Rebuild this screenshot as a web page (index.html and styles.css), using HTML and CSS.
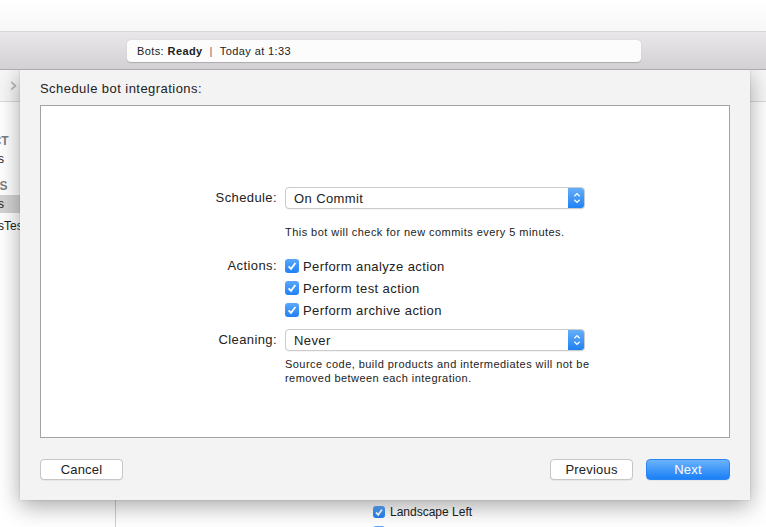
FILE: index.html
```html
<!DOCTYPE html>
<html lang="en">
<head>
  <meta charset="UTF-8">
  <meta name="viewport" content="width=device-width, initial-scale=1.0">
  <title>Bots</title>
  <link rel="stylesheet" href="styles.css">
</head>
<body>
  <div class="titlebar"></div>
  <header class="toolbar">
    <div class="activity">
      <span>Bots: <b>Ready</b></span>
      <span class="sep">|</span>
      <span>Today at 1:33</span>
    </div>
  </header>

  <div class="workspace">
    <aside class="sidebar">
      <div class="jumpbar"><span class="chevron">›</span></div>
      <ul class="nav">
        <li class="nav-head head-project">PROJECT</li>
        <li class="nav-item">Demo Apps</li>
        <li class="nav-head head-targets">TARGETS</li>
        <li class="nav-item selected">Demo Apps</li>
        <li class="nav-item item-tests">Demo AppsTests</li>
      </ul>
    </aside>
    <section class="editor">
      <div class="jumpbar"></div>
      <div class="orientations">
        <label class="small-check"><span class="box"><svg viewBox="0 0 12 12"><path d="M3 6.4 L5.2 8.8 L9 3.4"/></svg></span>Landscape Left</label>
        <label class="small-check"><span class="box"><svg viewBox="0 0 12 12"><path d="M3 6.4 L5.2 8.8 L9 3.4"/></svg></span>Landscape Right</label>
      </div>
    </section>
  </div>

  <div class="sheet">
    <h1 class="sheet-title">Schedule bot integrations:</h1>
    <div class="sheet-box">
      <div class="row">
        <span class="label">Schedule:</span>
        <div class="popup">
          <span class="popup-value">On Commit</span>
          <span class="stepper"><svg viewBox="0 0 16 20"><path d="M5 8 L8 5 L11 8"/><path d="M5 12 L8 15 L11 12"/></svg></span>
        </div>
      </div>
      <div class="row row-note">
        <span class="label"></span>
        <p class="note">This bot will check for new commits every 5 minutes.</p>
      </div>
      <div class="row row-actions">
        <span class="label">Actions:</span>
        <div class="checks">
          <label class="check"><span class="box"><svg viewBox="0 0 14 14"><path d="M3.6 7.4 L6 9.9 L10.4 4"/></svg></span>Perform analyze action</label>
          <label class="check"><span class="box"><svg viewBox="0 0 14 14"><path d="M3.6 7.4 L6 9.9 L10.4 4"/></svg></span>Perform test action</label>
          <label class="check"><span class="box"><svg viewBox="0 0 14 14"><path d="M3.6 7.4 L6 9.9 L10.4 4"/></svg></span>Perform archive action</label>
        </div>
      </div>
      <div class="row row-cleaning">
        <span class="label">Cleaning:</span>
        <div class="popup">
          <span class="popup-value">Never</span>
          <span class="stepper"><svg viewBox="0 0 16 20"><path d="M5 8 L8 5 L11 8"/><path d="M5 12 L8 15 L11 12"/></svg></span>
        </div>
      </div>
      <div class="row row-note2">
        <span class="label"></span>
        <p class="note">Source code, build products and intermediates will not be<br>removed between each integration.</p>
      </div>
    </div>
    <footer class="sheet-buttons">
      <button class="btn">Cancel</button>
      <div class="btn-group">
        <button class="btn">Previous</button>
        <button class="btn btn-primary">Next</button>
      </div>
    </footer>
  </div>
</body>
</html>
```

FILE: styles.css
```css
* {
  box-sizing: border-box;
}

body {
  margin: 0;
  width: 766px;
  height: 527px;
  overflow: hidden;
  position: relative;
  background: #fff;
  font-family: 'Liberation Sans', Arial, sans-serif;
  font-size: 13px;
  color: #222;
}

.titlebar {
  height: 32px;
  background: linear-gradient(#fff, #f7f7f7);
  border-bottom: 1px solid #d6d6d6;
}

.toolbar {
  position: relative;
  z-index: 2;
  height: 38px;
  padding-top: 8px;
  background: linear-gradient(#e9e7e9, #d3d1d3);
  border-bottom: 1px solid #adabad;
  display: flex;
  justify-content: center;
}

.activity {
  width: 514px;
  height: 22px;
  margin-left: 2px;
  padding-left: 10px;
  background: #fcfcfc;
  border-radius: 4px;
  box-shadow: 0 0.5px 1px rgba(0, 0, 0, 0.2);
  display: flex;
  align-items: center;
  gap: 7px;
  font-size: 11px;
  letter-spacing: 0.4px;
  color: #222;
}

.activity .sep {
  color: #666;
}

.workspace {
  display: flex;
  height: 457px;
}

.sidebar {
  width: 116px;
  border-right: 1px solid #cfcfcf;
  overflow: hidden;
}

.jumpbar {
  height: 32px;
  background: #f7f7f7;
  border-bottom: 1px solid #d9d9d9;
}

.chevron {
  display: block;
  padding-left: 9px;
  font-size: 22px;
  line-height: 30px;
  color: #b5b5b5;
  font-family: 'DejaVu Sans', sans-serif;
}

.nav {
  list-style: none;
  margin: 0;
  margin-top: 30px;
  padding: 0;
}

.nav li {
  white-space: nowrap;
  height: 18px;
  line-height: 18px;
  font-size: 12px;
}

.nav-head {
  font-weight: bold;
  font-size: 11px;
  color: #7d7d7d;
}

.head-project {
  text-indent: -48px;
}

.head-targets {
  margin-top: 9px;
  text-indent: -49px;
}

.nav-item {
  text-indent: -58px;
}

.nav-item.selected {
  background: #d3d3d3;
}

.item-tests {
  margin-top: 4px;
}

.editor {
  flex: 1;
}

.orientations {
  padding: 403px 0 0 257px;
  display: flex;
  flex-direction: column;
  gap: 6px;
}

.small-check {
  display: flex;
  align-items: center;
  gap: 5px;
  font-size: 12px;
  height: 14px;
}

.small-check .box {
  width: 12px;
  height: 12px;
  border-radius: 3px;
  background: linear-gradient(#5aa8fb, #2180f4);
  display: flex;
}

.small-check svg {
  width: 12px;
  height: 12px;
  fill: none;
  stroke: #fff;
  stroke-width: 1.7;
}

.sheet {
  position: absolute;
  z-index: 1;
  left: 20px;
  top: 69px;
  width: 730px;
  height: 431px;
  padding: 12px 20px 0 20px;
  background: #f3f3f3;
  box-shadow: 0 6px 22px rgba(0, 0, 0, 0.35), 0 0 2px rgba(0, 0, 0, 0.15);
}

.sheet-title {
  margin: 0;
  font-size: 13px;
  font-weight: normal;
  line-height: 16px;
  letter-spacing: 0.45px;
}

.sheet-box {
  margin-top: 8px;
  height: 333px;
  background: #fff;
  border: 1px solid #a3a3a3;
  padding-top: 81px;
  letter-spacing: 0.4px;
}

.row {
  display: flex;
  gap: 8px;
}

.label {
  width: 236px;
  flex: none;
  text-align: right;
  line-height: 22px;
}

.popup {
  width: 300px;
  height: 22px;
  border: 1px solid #cbcbcb;
  border-radius: 4px;
  background: #fff;
  box-shadow: 0 0.5px 0.5px rgba(0, 0, 0, 0.08);
  display: flex;
  align-items: center;
  justify-content: space-between;
  overflow: hidden;
}

.popup-value {
  padding-left: 8px;
}

.stepper {
  width: 17px;
  height: 22px;
  margin: -1px -1px -1px 0;
  background: linear-gradient(#69b1fb, #1b7ff6);
  border-radius: 0 4px 4px 0;
  display: flex;
  align-items: center;
  justify-content: center;
}

.stepper svg {
  width: 14px;
  height: 18px;
  fill: none;
  stroke: #fff;
  stroke-width: 1.5;
}

.note {
  margin: 0;
  font-size: 11px;
  line-height: 14px;
  letter-spacing: 0.45px;
}

.row-note {
  margin-top: 16px;
}

.row-actions {
  margin-top: 16px;
}

.checks {
  display: flex;
  flex-direction: column;
}

.check {
  height: 22px;
  display: flex;
  align-items: center;
  gap: 4px;
}

.check .box {
  width: 14px;
  height: 14px;
  border-radius: 3px;
  background: linear-gradient(#5aa8fb, #2180f4);
  display: flex;
}

.check svg {
  width: 14px;
  height: 14px;
  fill: none;
  stroke: #fff;
  stroke-width: 1.8;
}

.row-cleaning {
  margin-top: 8px;
}

.row-note2 {
  margin-top: 6px;
}

.sheet-buttons {
  margin-top: 21px;
  display: flex;
  justify-content: space-between;
}

.btn-group {
  display: flex;
  gap: 13px;
}

.btn {
  width: 83px;
  height: 21px;
  padding: 0;
  font-family: inherit;
  font-size: 13px;
  letter-spacing: 0.2px;
  color: #222;
  background: #fff;
  border: 1px solid #c6c6c6;
  border-radius: 4px;
  box-shadow: 0 0.5px 0.5px rgba(0, 0, 0, 0.1);
}

.btn-primary {
  width: 84px;
  color: #fff;
  border-color: #2a84f2;
  background: linear-gradient(#6bb3fb, #1a7ff6);
}
```
